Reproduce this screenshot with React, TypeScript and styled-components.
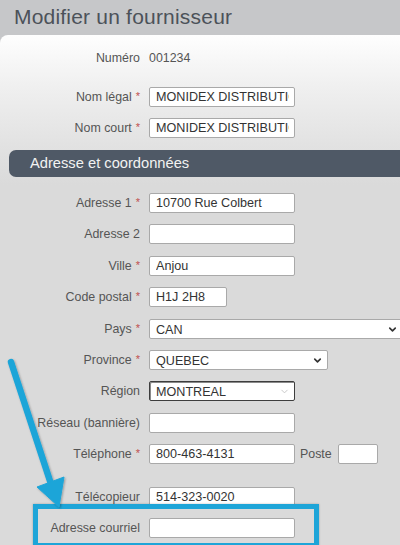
import styled, { createGlobalStyle } from "styled-components";
import { ChevronDown } from "lucide-react";

const GlobalStyle = createGlobalStyle`
  body {
    margin: 0;
    background: #c6c7c9;
    font-family: "Liberation Sans", Arial, sans-serif;
    overflow: hidden;
  }
`;

const Page = styled.div`
  position: relative;
  width: 400px;
  height: 545px;
  overflow: hidden;
`;

const TitleBar = styled.h1`
  margin: 0;
  height: 35px;
  line-height: 33px;
  padding-left: 14px;
  font-size: 21px;
  font-weight: normal;
  letter-spacing: 0.2px;
  color: #4c5259;
`;

const Panel = styled.div`
  border-top-left-radius: 8px;
  padding-top: 13px;
  height: 600px;
  background: linear-gradient(180deg, #fefefe 0px, #f0f0f0 50px, #e2e2e2 110px, #dadada 150px, #dadada 100%);
`;

const Group = styled.div<{ $gap: number }>`
  display: flex;
  flex-direction: column;
  gap: ${(p) => p.$gap}px;
`;

const Row = styled.div<{ $after?: number }>`
  display: grid;
  grid-template-columns: 140px auto;
  column-gap: 9px;
  align-items: center;
  height: 20px;
  margin-bottom: ${(p) => p.$after || 0}px;
`;

const Label = styled.label`
  text-align: right;
  font-size: 12.4px;
  color: #555;
  white-space: nowrap;
`;

const Star = styled.span`
  color: #c0504d;
  font-size: 11px;
  margin-left: 4px;
  vertical-align: 1px;
`;

const Value = styled.span`
  font-size: 12.4px;
  color: #555;
`;

const Field = styled.div`
  display: flex;
  align-items: center;
  gap: 5px;
`;

const TextInput = styled.input<{ $w: number }>`
  box-sizing: border-box;
  width: ${(p) => p.$w}px;
  height: 20px;
  border: 1px solid #a9a9a9;
  border-radius: 2px;
  background: #fff;
  padding: 0 5px 0 6px;
  font-family: "Liberation Sans", Arial, sans-serif;
  font-size: 12.6px;
  color: #333;
  outline: none;
`;

const SelectWrap = styled.div<{ $w: number; $locked?: boolean }>`
  position: relative;
  box-sizing: border-box;
  width: ${(p) => p.$w}px;
  height: 20px;
  flex-shrink: 0;
  border: 1px solid ${(p) => (p.$locked ? "#3d3d3d" : "#a9a9a9")};
  box-shadow: ${(p) => (p.$locked ? "inset 1px 1px 0 #8a8a8a" : "none")};
  border-radius: 2px;
  background: #fff;
  color: ${(p) => (p.$locked ? "#c4c4c4" : "#333")};

  svg {
    position: absolute;
    right: 4px;
    top: 4px;
  }
`;

const Select = styled.select`
  appearance: none;
  width: 100%;
  height: 100%;
  border: none;
  background: transparent;
  padding: 0 0 0 6px;
  font-family: "Liberation Sans", Arial, sans-serif;
  font-size: 12.6px;
  color: #333;
  outline: none;
`;

const SectionHeader = styled.div`
  margin: 12px 0 16px 9px;
  height: 27px;
  line-height: 26px;
  padding-left: 21px;
  border-radius: 7px 0 0 7px;
  background: #4f5966;
  color: #f2f2f2;
  font-size: 14.7px;
`;

const Poste = styled.span`
  font-size: 12.4px;
  color: #555;
  margin-right: 1px;
`;

const HighlightRow = styled.div`
  position: relative;
`;

const Highlight = styled.div`
  position: absolute;
  left: 33px;
  top: -14px;
  width: 286px;
  height: 44px;
  box-sizing: border-box;
  border: 5px solid #1ea5d8;
  box-shadow: 0 0 2px rgba(0, 0, 0, 0.25);
  pointer-events: none;
`;

const Arrow = styled.svg`
  position: absolute;
  left: 0;
  top: 0;
  pointer-events: none;
`;

type SelectProps = { w: number; value: string; locked?: boolean };

const Dropdown = ({ w, value, locked }: SelectProps) => (
  <SelectWrap $w={w} $locked={locked}>
    <Select defaultValue={value}>
      <option>{value}</option>
    </Select>
    <ChevronDown size={11} strokeWidth={locked ? 2 : 3.5} />
  </SelectWrap>
);

const Req = () => <Star>*</Star>;

const App = () => {
  return (
    <Page>
      <GlobalStyle />
      <TitleBar>Modifier un fournisseur</TitleBar>
      <Panel>
        <Group $gap={11}>
          <Row $after={8}>
            <Label>Numéro</Label>
            <Value>001234</Value>
          </Row>
          <Row>
            <Label>
              Nom légal<Req />
            </Label>
            <TextInput $w={146} defaultValue="MONIDEX DISTRIBUTION" />
          </Row>
          <Row>
            <Label>
              Nom court<Req />
            </Label>
            <TextInput $w={146} defaultValue="MONIDEX DISTRIBUTION" />
          </Row>
        </Group>

        <SectionHeader>Adresse et coordonnées</SectionHeader>

        <Group $gap={11.4}>
          <Row>
            <Label>
              Adresse 1<Req />
            </Label>
            <TextInput $w={146} defaultValue="10700 Rue Colbert" />
          </Row>
          <Row>
            <Label>Adresse 2</Label>
            <TextInput $w={146} defaultValue="" />
          </Row>
          <Row>
            <Label>
              Ville<Req />
            </Label>
            <TextInput $w={146} defaultValue="Anjou" />
          </Row>
          <Row>
            <Label>
              Code postal<Req />
            </Label>
            <TextInput $w={78} defaultValue="H1J 2H8" />
          </Row>
          <Row>
            <Label>
              Pays<Req />
            </Label>
            <Dropdown w={254} value="CAN" />
          </Row>
          <Row>
            <Label>
              Province<Req />
            </Label>
            <Dropdown w={179} value="QUEBEC" />
          </Row>
          <Row>
            <Label>Région</Label>
            <Dropdown w={146} value="MONTREAL" locked />
          </Row>
          <Row>
            <Label>Réseau (bannière)</Label>
            <TextInput $w={146} defaultValue="" />
          </Row>
          <Row $after={11}>
            <Label>
              Téléphone<Req />
            </Label>
            <Field>
              <TextInput $w={146} defaultValue="800-463-4131" />
              <Poste>Poste</Poste>
              <TextInput $w={40} defaultValue="" />
            </Field>
          </Row>
          <Row>
            <Label>Télécopieur</Label>
            <TextInput $w={146} defaultValue="514-323-0020" />
          </Row>
          <HighlightRow>
            <Row>
              <Label>Adresse courriel</Label>
              <TextInput $w={146} defaultValue="" />
            </Row>
            <Highlight />
          </HighlightRow>
        </Group>
      </Panel>

      <Arrow width="400" height="545" viewBox="0 0 400 545">
        <defs>
          <filter id="sh" x="-20%" y="-20%" width="140%" height="140%">
            <feDropShadow dx="1" dy="1" stdDeviation="1" floodColor="#000" floodOpacity="0.3" />
          </filter>
        </defs>
        <g filter="url(#sh)" fill="#1ea5d8" stroke="#1ea5d8">
          <line x1="11" y1="362" x2="51" y2="484" strokeWidth="6.5" strokeLinecap="round" />
          <polygon points="37,487 64,477 59,507" strokeWidth="1" strokeLinejoin="round" />
        </g>
      </Arrow>
    </Page>
  );
};

export default App;
